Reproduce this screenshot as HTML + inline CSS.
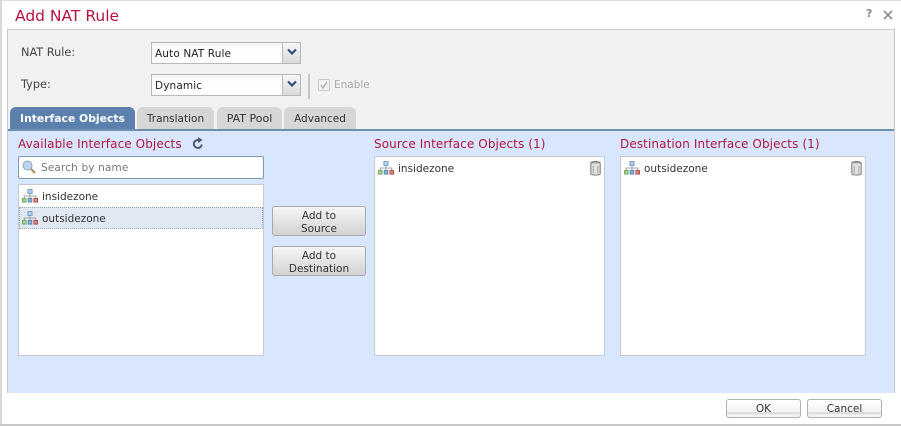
<!DOCTYPE html>
<html><head><meta charset="utf-8">
<style>
html,body{margin:0;padding:0;}
body{width:901px;height:426px;position:relative;overflow:hidden;background:#fff;font-family:"DejaVu Sans","Liberation Sans",sans-serif;font-size:10.5px;color:#333;}
.a{position:absolute;box-sizing:border-box;white-space:nowrap;}
.h{color:#b5133f;font-size:12px;letter-spacing:.1px;line-height:14px;}
.sel{height:22px;width:150px;left:151px;border:1px solid #b5b8bc;background:linear-gradient(#f4f4f4,#fff 40%);line-height:23px;padding-left:3px;color:#222;letter-spacing:.12px;}
.sel i{position:absolute;right:0;top:0;bottom:0;width:17px;border-left:1px solid #b5b8bc;background:linear-gradient(#f6f6f6,#dcdcdc);}
.sel svg{position:absolute;right:3px;top:5px;}
.tab{top:107px;height:22px;background:#d6d6d6;border-radius:6px 6px 0 0;text-align:center;line-height:24px;color:#333;}
.box{background:#fff;border:1px solid #c6c9cf;}
.btn{border:1px solid #a9a9a9;border-radius:3px;background:linear-gradient(#f6f6f6,#d2d2d2);text-align:center;line-height:13px;color:#333;width:94px;height:30px;left:272px;padding-top:3px;}
.fb{top:399px;height:19px;border:1px solid #b0b0b0;border-radius:3px;background:linear-gradient(#fff 0,#f4f4f4 70%,#d4d4d4 75%,#f2f2f2 88%);text-align:center;line-height:19px;color:#333;}
.lb{font-size:11.3px;line-height:14px;color:#444;}
</style></head><body>
<svg width="0" height="0" style="position:absolute"><defs>
<symbol id="net" viewBox="0 0 16 14">
<rect x="5.9" y="0.5" width="4.2" height="4" fill="#b4d0ea" stroke="#6f9cc6" stroke-width=".9"/>
<path d="M8 4.5V7M2.2 9V7H13.8V9M8 7V9" stroke="#8a8a8a" fill="none" stroke-width=".8"/>
<rect x="0.5" y="9.5" width="3.6" height="3.6" fill="#a8d096" stroke="#68a856" stroke-width=".9"/>
<rect x="6.2" y="9.5" width="3.6" height="3.6" fill="#8fb6d6" stroke="#4a80ae" stroke-width=".9"/>
<rect x="11.9" y="9.5" width="3.6" height="3.6" fill="#d88a84" stroke="#b0443e" stroke-width=".9"/>
</symbol>
<symbol id="trash" viewBox="0 0 11 15">
<ellipse cx="5.5" cy="2.3" rx="4.7" ry="1.8" fill="#a8a8a8" stroke="#777"/>
<path d="M.8 2.5V12.8C.8 14.5 10.2 14.5 10.2 12.8V2.5" fill="#e2e2e2" stroke="#777"/>
<path d="M3.2 5V12.5M7.8 5V12.5" stroke="#a5a5a5"/>
</symbol>
<symbol id="caret" viewBox="0 0 10 7"><path d="M1 1.5L5 5.5L9 1.5" fill="none" stroke="#2f4f7a" stroke-width="2.2"/></symbol>
</defs></svg>

<div class="a" style="left:0;top:0;width:901px;height:1px;background:#ddd"></div>
<div class="a" style="left:0;top:0;width:2px;height:426px;background:#d8d8d8"></div>
<div class="a" style="left:0;top:424px;width:901px;height:2px;background:#c8c8c8"></div>
<div class="a" style="left:15px;top:6px;font-size:15.5px;line-height:20px;color:#b5133f;">Add NAT Rule</div>
<div class="a" style="left:866px;top:6px;font-size:11px;font-weight:bold;color:#888;line-height:16px;">?</div>
<svg class="a" style="left:883px;top:10px" width="10" height="10" viewBox="0 0 10 10"><path d="M1 1L9 9M9 1L1 9" stroke="#888" stroke-width="1.6"/></svg>

<div class="a" style="left:7px;top:29px;width:888px;height:364px;background:#f1f1f1;border:1px solid #c8c9cc;border-bottom:0"></div>

<div class="a lb" style="left:21px;top:46px;">NAT Rule:</div>
<div class="a lb" style="left:21px;top:78px;">Type:</div>
<div class="a sel" style="top:42px">Auto NAT Rule<i></i><svg width="10" height="7"><use href="#caret"/></svg></div>
<div class="a sel" style="top:74px">Dynamic<i></i><svg width="10" height="7"><use href="#caret"/></svg></div>
<div class="a" style="left:308px;top:74px;width:2px;height:25px;background:#c4c4c4"></div>
<div class="a" style="left:318px;top:79px;width:12px;height:12px;border:1px solid #c8c8c8;border-radius:2px;background:#f0f0f0"></div>
<svg class="a" style="left:320px;top:81px" width="8" height="8" viewBox="0 0 8 8"><path d="M1 4L3 7L7 1" fill="none" stroke="#aaa" stroke-width="1.2"/></svg>
<div class="a" style="left:334px;top:78px;line-height:15px;color:#aaa;">Enable</div>

<div class="a tab" style="left:10px;width:125px;background:#5b80ae;color:#fff;font-weight:bold;font-size:10.8px;">Interface Objects</div>
<div class="a tab" style="left:137px;width:77px;">Translation</div>
<div class="a tab" style="left:217px;width:65px;font-size:11px;">PAT Pool</div>
<div class="a tab" style="left:284px;width:72px;">Advanced</div>

<div class="a" style="left:8px;top:129px;width:886px;height:2px;background:#6f8fae"></div>
<div class="a" style="left:8px;top:131px;width:886px;height:262px;background:#d8e7fd"></div>

<div class="a h" style="left:18px;top:137px;">Available Interface Objects</div>
<svg class="a" style="left:192px;top:137px" width="12" height="13" viewBox="0 0 12 13"><path d="M9.8 7.5A4 4 0 1 1 6.5 3" fill="none" stroke="#4d5a66" stroke-width="2"/><path d="M6 0L10.5 3L6 6Z" fill="#4d5a66"/></svg>
<div class="a h" style="left:374px;top:137px;">Source Interface Objects (1)</div>
<div class="a h" style="left:620px;top:137px;">Destination Interface Objects (1)</div>

<div class="a" style="left:18px;top:156px;width:246px;height:23px;background:#fff;border:1px solid #7f9ab5;border-radius:2px;color:#777;line-height:22px;padding-left:22px;letter-spacing:.15px;">Search by name</div>
<svg class="a" style="left:22px;top:160px" width="14" height="14" viewBox="0 0 14 14"><circle cx="5.5" cy="5.5" r="4.5" fill="#bcd6ee" stroke="#8aa6c2"/><path d="M9 9L13 13" stroke="#b08a55" stroke-width="2"/></svg>

<div class="a box" style="left:18px;top:184px;width:246px;height:172px;"></div>
<div class="a" style="left:19px;top:207px;width:244px;height:22px;background:#e0e8f3;border:1px dotted #9aa6b5"></div>
<svg class="a" style="left:22px;top:189px" width="16" height="14"><use href="#net"/></svg>
<div class="a" style="left:42px;top:190px;line-height:14px;">insidezone</div>
<svg class="a" style="left:22px;top:211px" width="16" height="14"><use href="#net"/></svg>
<div class="a" style="left:42px;top:212px;line-height:14px;">outsidezone</div>

<div class="a btn" style="top:206px;">Add to<br>Source</div>
<div class="a btn" style="top:246px;">Add to<br>Destination</div>

<div class="a box" style="left:374px;top:156px;width:231px;height:200px;"></div>
<svg class="a" style="left:378px;top:161px" width="16" height="14"><use href="#net"/></svg>
<div class="a" style="left:398px;top:162px;line-height:14px;">insidezone</div>
<svg class="a" style="left:590px;top:161px" width="11" height="15"><use href="#trash"/></svg>

<div class="a box" style="left:620px;top:156px;width:246px;height:200px;"></div>
<svg class="a" style="left:624px;top:161px" width="16" height="14"><use href="#net"/></svg>
<div class="a" style="left:644px;top:162px;line-height:14px;">outsidezone</div>
<svg class="a" style="left:851px;top:161px" width="11" height="15"><use href="#trash"/></svg>

<div class="a fb" style="left:726px;width:75px;">OK</div>
<div class="a fb" style="left:807px;width:75px;">Cancel</div>
</body></html>
